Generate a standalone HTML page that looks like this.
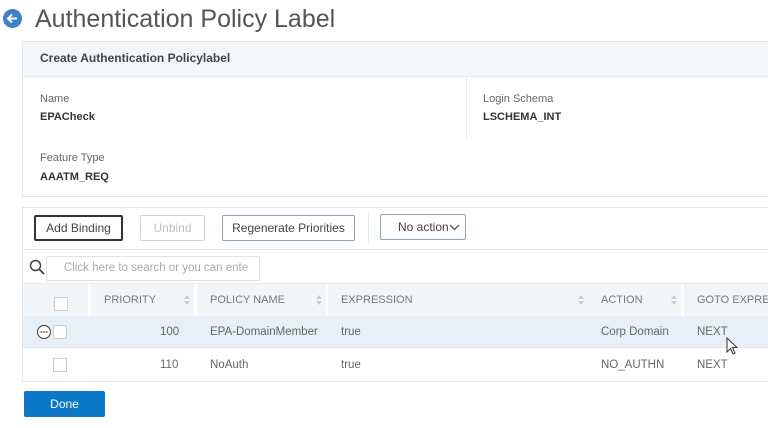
<!DOCTYPE html>
<html><head><style>
*{margin:0;padding:0;box-sizing:border-box}
body{width:768px;height:428px;background:#fff;font-family:"Liberation Sans",sans-serif;position:relative;overflow:hidden;color:#555}
.a{position:absolute;white-space:nowrap}
.btn{position:absolute;height:26px;border:1px solid #8aa3ba;border-radius:2px;font-size:12px;color:#444;text-align:center;line-height:24px;background:#fff}
.th{position:absolute;top:284px;height:32px;background:#f3f6f9;font-size:11px;color:#777;line-height:32px;padding-left:13px;white-space:nowrap;overflow:hidden}
.sort{position:absolute;right:4px;top:10px;width:6px;height:12px}
.cb{position:absolute;width:14px;height:14px;border:1px solid #ccc;background:#fff;border-radius:1px}
.td{position:absolute;font-size:11.5px;color:#666}
</style></head><body>
<div class="a" style="left:3px;top:9px;width:19px;height:19px;border-radius:50%;background:#3d82c9"></div>
<svg class="a" style="left:3px;top:9px" width="19" height="19" viewBox="0 0 19 19"><path d="M14 9.5H5.5M9 5.5L5 9.5L9 13.5" stroke="#fff" stroke-width="2" fill="none"/></svg>
<div class="a" style="left:35px;top:5px;font-size:25px;color:#555">Authentication Policy Label</div>

<div class="a" style="left:22px;top:41px;width:760px;height:156px;border:1px solid #e3e6ea;background:#fff"></div>
<div class="a" style="left:23px;top:42px;width:760px;height:35px;background:#f4f7fa;border-bottom:1px solid #e3e6ea"></div>
<div class="a" style="left:40px;top:51px;font-size:12px;font-weight:bold;color:#444">Create Authentication Policylabel</div>
<div class="a" style="left:40px;top:93px;font-size:11px;color:#666">Name</div>
<div class="a" style="left:40px;top:111px;font-size:11px;font-weight:bold;color:#333">EPACheck</div>
<div class="a" style="left:466px;top:78px;width:1px;height:60px;background:#e8e8e8"></div>
<div class="a" style="left:483px;top:93px;font-size:11px;color:#666">Login Schema</div>
<div class="a" style="left:483px;top:111px;font-size:11px;font-weight:bold;color:#333">LSCHEMA_INT</div>
<div class="a" style="left:40px;top:152px;font-size:11px;color:#666">Feature Type</div>
<div class="a" style="left:40px;top:171px;font-size:11px;font-weight:bold;color:#333">AAATM_REQ</div>

<div class="a" style="left:22px;top:207px;width:760px;height:175px;border:1px solid #e3e6ea;background:#fff"></div>
<div class="btn" style="left:34px;top:215px;width:89px;border:2px solid #333;line-height:22px">Add Binding</div>
<div class="btn" style="left:140px;top:215px;width:65px;border-color:#c8d4df;color:#b8c0c8">Unbind</div>
<div class="btn" style="left:222px;top:215px;width:133px">Regenerate Priorities</div>
<div class="a" style="left:368px;top:213px;width:1px;height:30px;background:#e3e6ea"></div>
<div class="btn" style="left:380px;top:214px;width:86px;text-align:left;padding-left:17px">No action<svg style="position:absolute;left:68px;top:9px" width="11" height="7" viewBox="0 0 11 7"><path d="M1 1L5.5 5.5L10 1" stroke="#555" stroke-width="1.3" fill="none"/></svg></div>
<div class="a" style="left:23px;top:249px;width:760px;height:1px;background:#e3e6ea"></div>
<svg class="a" style="left:29px;top:259px" width="17" height="17" viewBox="0 0 17 17"><circle cx="6.5" cy="6.5" r="5" stroke="#444" stroke-width="1.5" fill="none"/><path d="M10 10L15 15" stroke="#444" stroke-width="1.8"/></svg>
<div class="a" style="left:46px;top:256px;width:214px;height:25px;border:1px solid #dde2e7;border-radius:2px;font-size:11.5px;color:#aaa;line-height:23px;padding-left:17px">Click here to search or you can ente</div>
<div class="a" style="left:23px;top:283px;width:760px;height:1px;background:#e3e6ea"></div>

<div class="th" style="left:23px;width:65px"></div>
<div class="cb" style="left:54px;top:297px"></div>
<div class="th" style="left:91px;width:103px">PRIORITY<svg class="sort" viewBox="0 0 6 12"><path d="M0 5L3 1L6 5ZM0 7L3 11L6 7Z" fill="#ccc"/></svg></div>
<div class="th" style="left:197px;width:129px">POLICY NAME<svg class="sort" viewBox="0 0 6 12"><path d="M0 5L3 1L6 5ZM0 7L3 11L6 7Z" fill="#ccc"/></svg></div>
<div class="th" style="left:328px;width:260px">EXPRESSION<svg class="sort" viewBox="0 0 6 12"><path d="M0 5L3 1L6 5ZM0 7L3 11L6 7Z" fill="#ccc"/></svg></div>
<div class="th" style="left:588px;width:93px">ACTION<svg class="sort" viewBox="0 0 6 12"><path d="M0 5L3 1L6 5ZM0 7L3 11L6 7Z" fill="#ccc"/></svg></div>
<div class="th" style="left:684px;width:90px">GOTO EXPRESSION</div>

<div class="a" style="left:23px;top:316px;width:760px;height:32px;background:#e8eff6;border-bottom:1px solid #dfe4e9"></div>
<svg class="a" style="left:36px;top:324px" width="16" height="16" viewBox="0 0 16 16"><circle cx="8" cy="8" r="6.5" stroke="#555" stroke-width="1.2" fill="#fff"/><circle cx="5.3" cy="8" r=".9" fill="#444"/><circle cx="8" cy="8" r=".9" fill="#444"/><circle cx="10.7" cy="8" r=".9" fill="#444"/></svg>
<div class="cb" style="left:53px;top:325px"></div>
<div class="td" style="left:160px;top:326px">100</div>
<div class="td" style="left:210px;top:326px">EPA-DomainMember</div>
<div class="td" style="left:341px;top:326px">true</div>
<div class="td" style="left:601px;top:326px">Corp Domain</div>
<div class="td" style="left:697px;top:326px">NEXT</div>
<svg class="a" style="left:726px;top:337px" width="12" height="18" viewBox="0 0 12 18"><path d="M1 1V15L4.5 11.5L7 17L9 16L6.5 10.5H11Z" fill="#fff" stroke="#333" stroke-width="1"/></svg>

<div class="cb" style="left:53px;top:358px"></div>
<div class="td" style="left:160px;top:359px">110</div>
<div class="td" style="left:210px;top:359px">NoAuth</div>
<div class="td" style="left:341px;top:359px">true</div>
<div class="td" style="left:601px;top:359px">NO_AUTHN</div>
<div class="td" style="left:697px;top:359px">NEXT</div>

<div class="a" style="left:24px;top:391px;width:81px;height:26px;background:#0b78c6;border-radius:2px;color:#fff;font-size:12px;text-align:center;line-height:26px">Done</div>
</body></html>
